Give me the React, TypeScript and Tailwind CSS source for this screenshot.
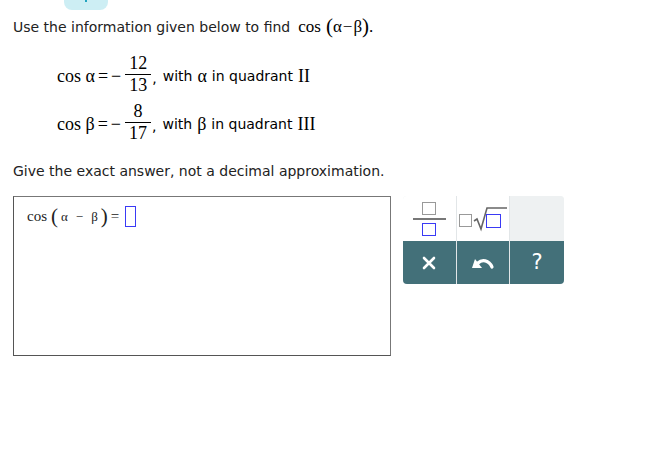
const Frac = ({ top, bottom }: { top: string; bottom: string }) => (
  <span className="ml-[4px] inline-flex flex-col items-center">
    <span className="px-[4px] leading-[22px]">{top}</span>
    <span className="h-px w-full bg-black" />
    <span className="px-[4px] leading-[20px]">{bottom}</span>
  </span>
)

const Given = ({ top, bottom, sym, quad }: { top: string; bottom: string; sym: string; quad: string }) => (
  <div className="flex items-center font-['Liberation_Serif'] text-[18px] text-black">
    <span className="mt-[6px]">cos {sym}</span>
    <span className="ml-[3px] mt-[6px]">=</span>
    <span className="ml-[3px] mt-[6px]">−</span>
    <Frac top={top} bottom={bottom} />
    <span className="ml-[1px] mt-[10px] font-['DejaVu_Sans'] text-[14px]">,</span>
    <span className="ml-[6px] mt-[6px] font-['DejaVu_Sans'] text-[14px]">with</span>
    <span className="ml-[5px] mt-[6px]">{sym}</span>
    <span className="ml-[5px] mt-[6px] font-['DejaVu_Sans'] text-[14px]">in quadrant</span>
    <span className="ml-[5px] mt-[6px]">{quad}</span>
  </div>
)

const EmptyBox = ({ className }: { className: string }) => (
  <span className={`inline-block border ${className}`} />
)

const App = () => {
  return (
    <div className="h-[473px] w-[650px] bg-white font-['DejaVu_Sans'] text-[14px] text-[#222]">
      <div className="ml-[64px] flex h-[10px] w-[44px] justify-center rounded-b-[8px] bg-[#cdeef4]">
        <span className="h-[2px] w-[2px] bg-[#21a3bf]" />
      </div>
      <div className="ml-[13px] mt-[6px] flex h-[22px] items-center">
        <span>Use the information given below to find</span>
        <span className="ml-[8px] flex items-center font-['Liberation_Serif'] text-[17px] text-black">
          <span>cos</span>
          <span className="ml-[5px] text-[21px]">(</span>
          <span>α</span>
          <span className="mx-[1px]">−</span>
          <span>β</span>
          <span className="text-[21px]">)</span>
          <span>.</span>
        </span>
      </div>
      <div className="ml-[57px] mt-[14px] flex flex-col gap-[5px]">
        <Given top="12" bottom="13" sym="α" quad="II" />
        <Given top="8" bottom="17" sym="β" quad="III" />
      </div>
      <p className="ml-[13px] mt-[18px] leading-[20px]">Give the exact answer, not a decimal approximation.</p>
      <div className="mt-[15px] flex items-start gap-[12px] pl-[13px]">
        <div className="h-[160px] w-[378px] border border-[#777] border-b-[#555] border-l-[#555] px-[13px] pt-[8px]">
          <div className="flex items-center font-['Liberation_Serif'] text-[15px] text-[#222]">
            <span>cos</span>
            <span className="ml-[4px] text-[21px] leading-none">(</span>
            <span className="ml-[3px] text-[13px]">α</span>
            <span className="mx-[8px] text-[13px]">−</span>
            <span className="text-[13px]">β</span>
            <span className="ml-[3px] text-[21px] leading-none">)</span>
            <span className="ml-[3px]">=</span>
            <EmptyBox className="ml-[6px] h-[21px] w-[11px] border-[#3a3af5]" />
          </div>
        </div>
        <div className="grid w-[161px] grid-cols-3 overflow-hidden rounded-[4px] bg-[#eef1f2]">
          <div className="flex h-[45px] flex-col items-center justify-center gap-[3px] border-r border-[#e2e6e8] bg-white">
            <EmptyBox className="h-[13px] w-[14px] border-[#999]" />
            <span className="h-[2px] w-[33px] bg-[#777]" />
            <EmptyBox className="h-[13px] w-[14px] border-[#3a3af5]" />
          </div>
          <div className="flex h-[45px] items-center justify-center border-r border-[#e2e6e8] bg-white">
            <EmptyBox className="mt-[3px] h-[13px] w-[13px] border-[#999]" />
            <svg width="34" height="26" viewBox="0 0 34 26" className="ml-[1px]">
              <path d="M1 15 L4 13 L8 23 L14 2 L34 2" fill="none" stroke="#666" strokeWidth="1.6" />
              <rect x="13.5" y="8.5" width="14" height="13" fill="none" stroke="#3a3af5" strokeWidth="1" />
            </svg>
          </div>
          <div className="h-[45px] bg-[#eef1f2]" />
          <button className="flex h-[43px] items-center justify-center border-r border-[#e2e6e8] bg-[#437079] text-white">
            <svg width="14" height="14" viewBox="0 0 14 14">
              <path d="M2 2 L12 12 M12 2 L2 12" stroke="white" strokeWidth="2.6" strokeLinecap="round" />
            </svg>
          </button>
          <button className="flex h-[43px] items-center justify-center border-r border-[#e2e6e8] bg-[#437079] text-white">
            <svg width="24" height="14" viewBox="0 0 24 14">
              <path d="M21 11 C18 4 11 3 7 7" fill="none" stroke="white" strokeWidth="3.2" strokeLinecap="round" />
              <path d="M1 12 L11 12 L4 3 Z" fill="white" />
            </svg>
          </button>
          <button className="flex h-[43px] items-center justify-center bg-[#437079] font-['DejaVu_Sans'] text-[21px] text-white">
            ?
          </button>
        </div>
      </div>
    </div>
  )
}

export default App
